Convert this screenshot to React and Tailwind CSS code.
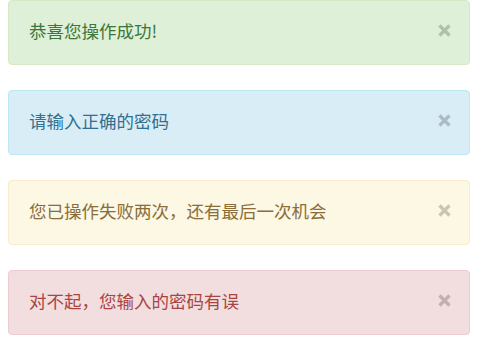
import React, { useState } from "react";

const alerts = [
    { id: 1, text: "恭喜您操作成功!", cls: "bg-[#dff0d8] border-[#d6e9c6] text-[#3c763d]" },
    { id: 2, text: "请输入正确的密码", cls: "bg-[#d9edf7] border-[#bce8f1] text-[#31708f]" },
    { id: 3, text: "您已操作失败两次，还有最后一次机会", cls: "bg-[#fcf8e3] border-[#faebcc] text-[#8a6d3b]" },
    { id: 4, text: "对不起，您输入的密码有误", cls: "bg-[#f2dede] border-[#ebccd1] text-[#a94442]" },
];

const App = () => {
    const [list, setList] = useState(alerts);

    return (
        <div className="w-[485px] h-[343px] overflow-hidden bg-white px-2 font-['Noto_Sans_CJK_SC','Noto_Sans',sans-serif]">
            {list.map((a) => (
                <div
                    key={a.id}
                    className={`flex items-center justify-between w-[462px] h-[65px] mb-[25px] border rounded pl-5 pr-[19px] pb-[4px] ${a.cls}`}
                >
                    <span className="text-[17.5px] leading-[23px]">{a.text}</span>
                    <button
                        type="button"
                        onClick={() => setList(list.filter((x) => x.id !== a.id))}
                        className="text-black opacity-20 mr-[-1px]"
                    >
                        {/* close icon */}
                        <svg width="13" height="13" viewBox="0 0 13 13">
                            <path d="M1.5 1.5 L11.5 11.5 M11.5 1.5 L1.5 11.5" stroke="currentColor" strokeWidth="3.2" />
                        </svg>
                    </button>
                </div>
            ))}
        </div>
    );
};

export default App;
